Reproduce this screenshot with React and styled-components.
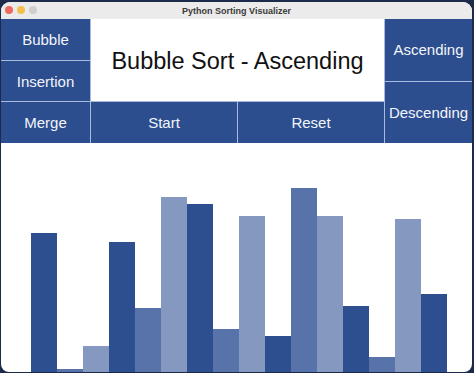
import React from 'react';
import styled, { createGlobalStyle } from 'styled-components';

const GlobalStyle = createGlobalStyle`
    html, body {
        margin: 0;
        padding: 0;
        background: #1c2b4c;
        font-family: "Liberation Sans", Arial, sans-serif;
    }
`;

//Bar data
const bars = [139, 3, 26, 130, 64, 175, 168, 43, 156, 36, 184, 156, 66, 15, 153, 78];
const shades = ['#2d4f8f', '#5873a9', '#8598c0'];

const App = () => {
    return (
        <>
            <GlobalStyle />
            <Window>
                <TitleBar>
                    <Lights>
                        <Light color="#ed6a5e" />
                        <Light color="#f5bf4f" />
                        <Light color="#cfcfcf" />
                    </Lights>
                    <WindowTitle>Python Sorting Visualizer</WindowTitle>
                </TitleBar>
                <Controls>
                    <Column width="89px">
                        <Button>Bubble</Button>
                        <Button>Insertion</Button>
                        <Button>Merge</Button>
                    </Column>
                    <Middle>
                        <Heading>Bubble Sort - Ascending</Heading>
                        <ActionRow>
                            <Button>Start</Button>
                            <Button>Reset</Button>
                        </ActionRow>
                    </Middle>
                    <Column width="87px">
                        <Button>Ascending</Button>
                        <Button>Descending</Button>
                    </Column>
                </Controls>
                <Chart>
                    {bars.map((h, i) => (
                        <Bar key={i} color={shades[i % 3]} style={{ height: h }} />
                    ))}
                </Chart>
            </Window>
        </>
    );
};

const Window = styled.div`
    margin: 2px 2px 0 1px;
    height: 370px;
    background: white;
    border-radius: 9px 9px 8px 8px;
    overflow: hidden;
    display: flex;
    flex-direction: column;
`;

const TitleBar = styled.div`
    height: 17px;
    background: #ebebeb;
    position: relative;
    display: flex;
    align-items: center;
    justify-content: center;
`;

const Lights = styled.div`
    position: absolute;
    left: 4px;
    top: 4px;
    display: flex;
    gap: 4px;
`;

const Light = styled.span`
    width: 8px;
    height: 8px;
    border-radius: 50%;
    background: ${p => p.color};
`;

const WindowTitle = styled.div`
    font-size: 9px;
    font-weight: bold;
    color: #3a3a3a;
`;

const Controls = styled.div`
    display: flex;
    height: 124px;
    background: #a9bbdc;
    gap: 1px;
`;

const Column = styled.div`
    width: ${p => p.width};
    display: flex;
    flex-direction: column;
    gap: 1px;
`;

const Middle = styled.div`
    flex: 1;
    display: flex;
    flex-direction: column;
    gap: 1px;
`;

const Heading = styled.div`
    height: 82px;
    padding-top: 2px;
    box-sizing: border-box;
    background: white;
    display: flex;
    align-items: center;
    justify-content: center;
    font-size: 23.5px;
    color: #111;
`;

const ActionRow = styled.div`
    flex: 1;
    display: flex;
    gap: 1px;
`;

const Button = styled.div`
    flex: 1;
    background: #2c4e8e;
    color: #f2f5fb;
    font-size: 15px;
    display: flex;
    align-items: center;
    justify-content: center;
`;

const Chart = styled.div`
    flex: 1;
    display: flex;
    align-items: flex-end;
    padding-left: 30px;
`;

const Bar = styled.div`
    width: 26px;
    background: ${p => p.color};
`;

export default App;
